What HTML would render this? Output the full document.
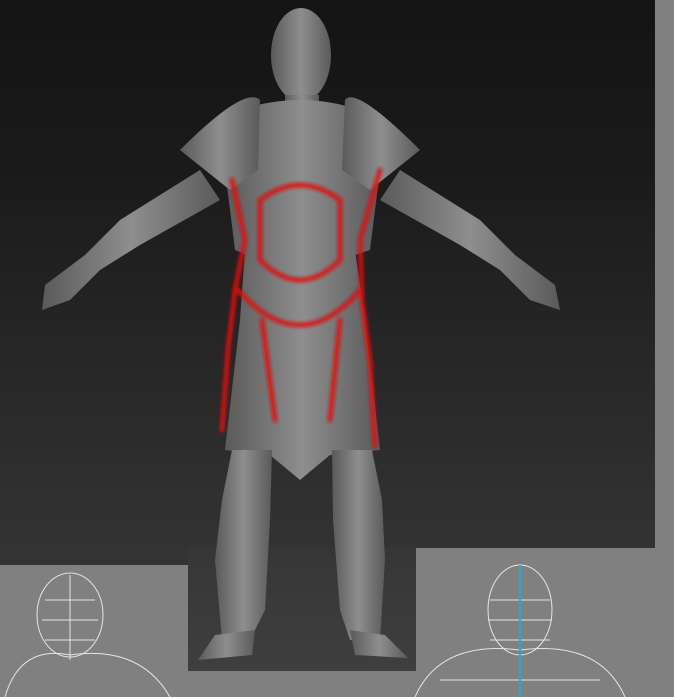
<!DOCTYPE html><html><head><style>
body{margin:0;width:674px;height:697px;background:#808080;position:relative;overflow:hidden}
.a{position:absolute}
</style></head><body>
<div class="a" style="left:0;top:0;width:655px;height:548px;background:linear-gradient(#141414,#1a1a1a 30%,#2c2c2c 80%,#333)"></div>
<div class="a" style="left:0;top:548px;width:188px;height:17px;background:#333"></div>
<div class="a" style="left:188px;top:548px;width:228px;height:123px;background:linear-gradient(#363636,#3f3f3f)"></div>
<svg class="a" style="left:0;top:0" width="674" height="697" viewBox="0 0 674 697">
<defs><linearGradient id="g" x1="0" x2="1"><stop offset="0" stop-color="#5a5a5a"/><stop offset=".5" stop-color="#8e8e8e"/><stop offset="1" stop-color="#5a5a5a"/></linearGradient>
<filter id="b"><feGaussianBlur stdDeviation="1.5"/></filter></defs>
<g fill="url(#g)">
<ellipse cx="301" cy="55" rx="30" ry="47"/>
<rect x="285" y="95" width="34" height="25"/>
<path d="M240 110 Q300 90 360 110 L380 170 L370 250 L340 260 L260 260 L235 250 L225 170Z"/>
<path d="M180 150 Q245 85 260 100 L258 170 L230 190Z"/>
<path d="M420 150 Q355 85 345 100 L342 170 L370 190Z"/>
<path d="M200 170 L120 220 L85 255 L45 285 L42 310 L70 300 L100 270 L140 245 L220 200Z"/>
<path d="M400 170 L480 220 L515 255 L555 285 L560 310 L530 300 L500 270 L460 245 L380 200Z"/>
<path d="M245 250 L355 250 L365 320 L380 450 L330 455 L300 480 L270 455 L225 450 L240 320Z"/>
<path d="M232 450 L272 450 L270 520 L265 610 L250 640 L222 640 L215 560 L222 500Z"/>
<path d="M332 450 L372 450 L382 500 L385 560 L380 640 L350 640 L340 610 L333 520Z"/>
<path d="M215 635 L255 630 L252 655 L198 660 Z"/>
<path d="M350 630 L385 635 L408 658 L355 655 Z"/>
</g>
<g fill="none" stroke="#e01010" stroke-width="5" opacity=".85" stroke-linecap="round" filter="url(#b)">
<path d="M232 180 L245 240 L235 290 L228 350 L222 430"/>
<path d="M380 170 L360 240 L362 300 L370 360 L375 445"/>
<path d="M260 200 Q300 170 340 200 L340 260 Q300 300 260 260Z"/>
<path d="M238 290 Q300 360 360 290"/>
<path d="M262 320 L275 420"/><path d="M340 320 L330 420"/>
</g>
<g stroke="#fff" stroke-width="1" fill="none" opacity=".8">
<ellipse cx="70" cy="615" rx="33" ry="42"/>
<path d="M5 697 Q20 645 70 655 Q140 645 170 697"/>
<path d="M45 600 H95 M42 620 H98 M45 640 H95 M70 575 V660"/>
<ellipse cx="520" cy="610" rx="32" ry="45"/>
<path d="M415 697 Q440 640 520 650 Q600 640 625 697"/>
<path d="M490 600 H550 M488 620 H552 M490 640 H550 M440 680 H600"/>
</g>
<path d="M520 565 V697" stroke="#2ad" stroke-width="2"/>
</svg>
</body></html>
